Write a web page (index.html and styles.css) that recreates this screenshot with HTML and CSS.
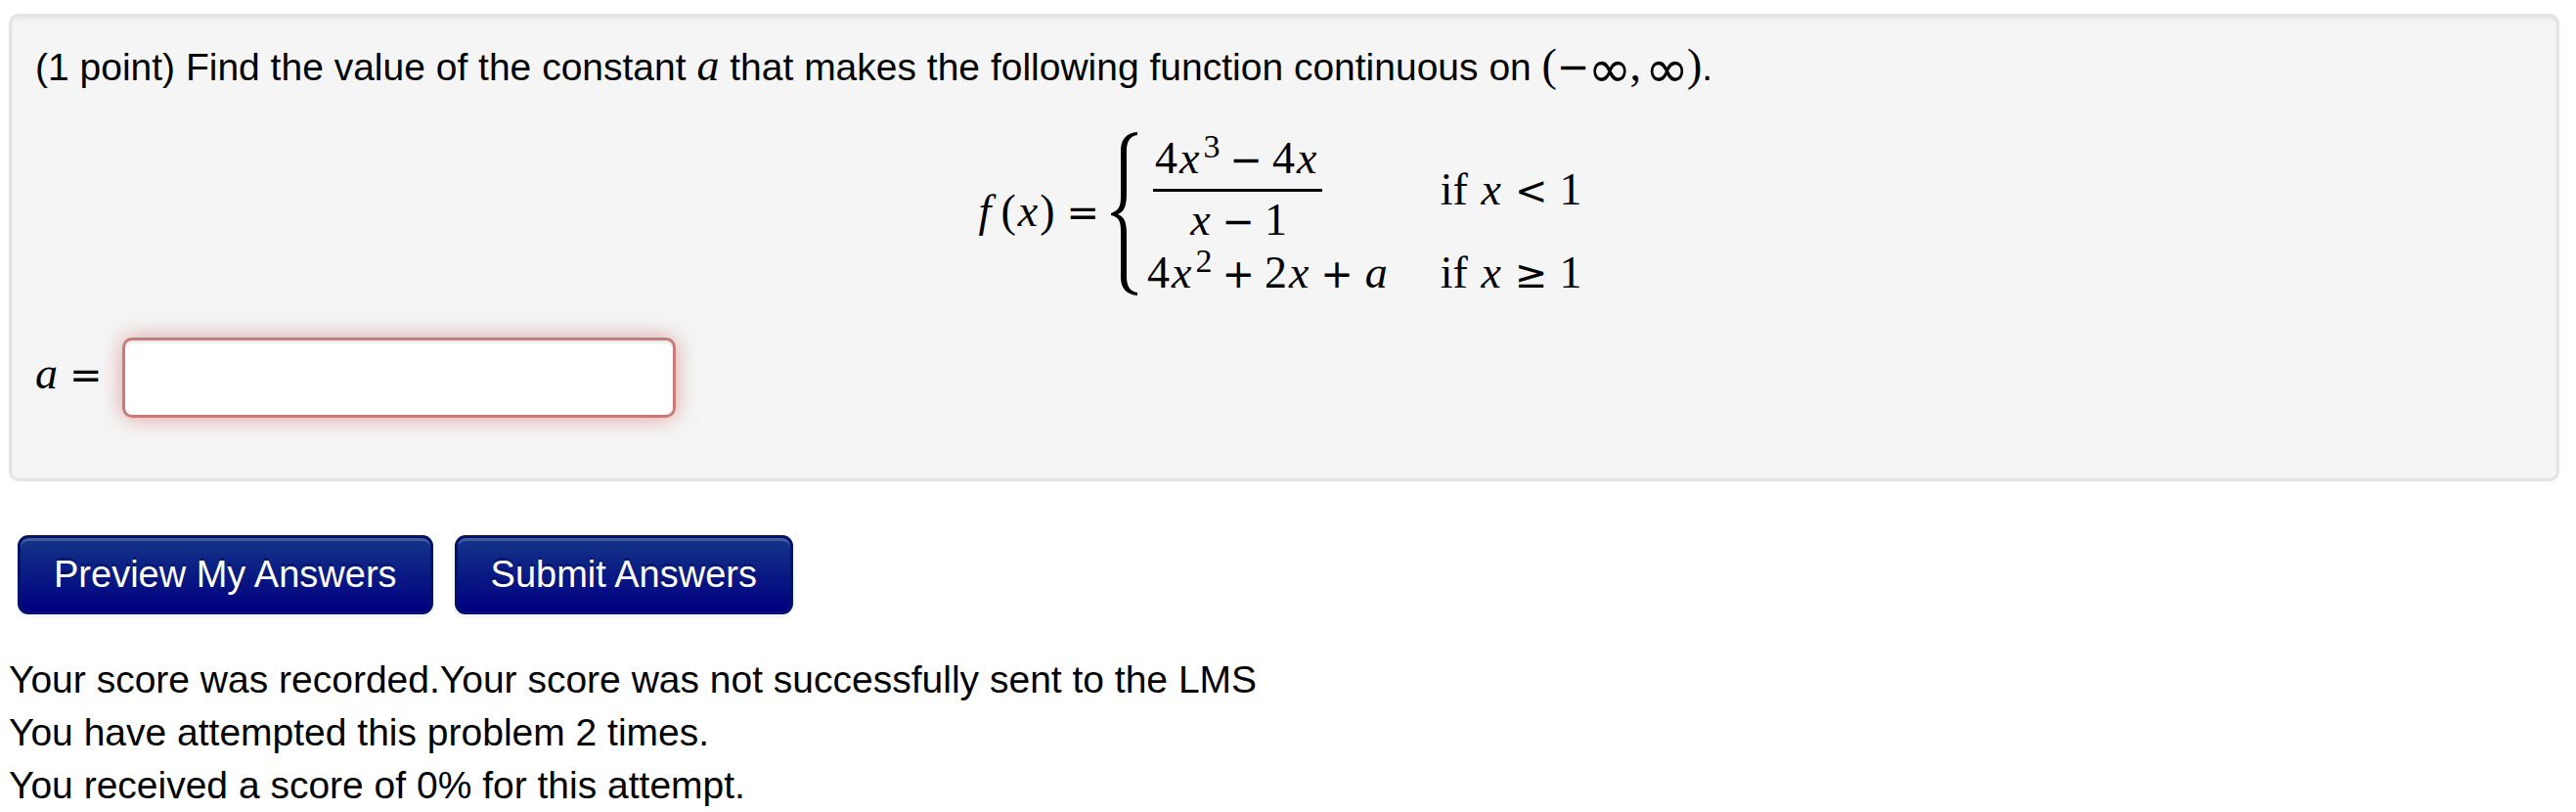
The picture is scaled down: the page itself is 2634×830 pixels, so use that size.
FILE: index.html
```
<!DOCTYPE html>
<html lang="en">
<head>
    <meta charset="utf-8">
    <title>Problem</title>
    <link rel="stylesheet" href="styles.css">
</head>
<body>
    <form class="problem-form">
        <div class="problem">
            <p>(1 point) Find the value of the constant <span class="math"><i>a</i></span> that makes the following function continuous on <span class="math">(<span class="sign">−</span><span class="inf">∞</span>,<span class="thin"></span><span class="inf">∞</span>)</span>.</p>

            <div class="math equation">
                <div class="lhs"><i class="func">f</i>(<i>x</i>)<span class="rel">=</span></div>
                <svg class="brace" viewBox="0 0 27 167" aria-hidden="true">
                    <path d="M27 0 C16 1 10 7 10 19 V66 C10 76 8 80 0 83 V85 C8 87 10 91 10 101 V148 C10 160 16 166 27 167 V164 C20 163 16 158 16 148 V105 C16 92 14 87 7 84 C14 81 16 75 16 62 V19 C16 9 20 4 27 3 Z"/>
                </svg>
                <div class="cases">
                    <div class="fraction">
                        <div class="numerator">4<i>x</i><sup>3</sup><span class="op">−</span>4<i>x</i></div>
                        <div class="denominator"><i>x</i><span class="op">−</span>1</div>
                    </div>
                    <div>if <i>x</i><span class="rel">&lt;</span>1</div>
                    <div>4<i>x</i><sup>2</sup><span class="op">+</span>2<i>x</i><span class="op">+</span><i>a</i></div>
                    <div>if <i>x</i><span class="rel">≥</span>1</div>
                </div>
            </div>

            <div class="answer">
                <label class="math" for="answer"><i>a</i><span class="rel">=</span></label>
                <input type="text" id="answer" autocomplete="off">
            </div>
        </div>

        <div class="buttons">
            <button type="button">Preview My Answers</button>
            <button type="button">Submit Answers</button>
        </div>
    </form>

    <div class="messages">
        <div>Your score was recorded.Your score was not successfully sent to the LMS</div>
        <div>You have attempted this problem 2 times.</div>
        <div>You received a score of 0% for this attempt.</div>
    </div>
</body>
</html>
```
FILE: styles.css
```
body {
    margin: 14px 17px 0 9px;
    font-family: "Liberation Sans", Arial, sans-serif;
    font-size: 39px;
    line-height: 54px;
    color: #000;
    background: #fff;
}

.problem {
    padding: 25px 24px 62px;
    border: 3px solid #e3e3e3;
    border-radius: 10px;
    background: #f5f5f5;
    box-shadow: inset 0 3px 3px rgba(0, 0, 0, 0.05);
}

.problem p {
    margin: 0;
}

/* math */
.math {
    font-family: "Liberation Serif", "Times New Roman", serif;
    font-size: 46px;
    line-height: 50px;
}

p .math {
    line-height: 0;
}

.thin {
    margin-left: 6px;
}

.op,
.rel,
.sign,
.inf {
    font-family: "DejaVu Sans", sans-serif;
    font-size: 40px;
    line-height: 0;
}

.op {
    margin: 0 10px;
}

.rel {
    margin: 0 12px;
}

.inf {
    margin: 0 -2px;
    font-size: 54px;
    vertical-align: -7px;
}

.math sup {
    margin-left: 2px;
    font-size: 34px;
    line-height: 0;
    vertical-align: 16px;
}

.equation {
    display: flex;
    justify-content: center;
    align-items: center;
    margin: 37px 10px 41px 0;
    white-space: nowrap;
}

.equation i {
    margin: 0 2px;
}

.lhs {
    margin-bottom: 6px;
}

.equation .func {
    margin-right: 10px;
}

.brace {
    width: 27px;
    height: 167px;
}

.cases {
    display: grid;
    grid-template-columns: auto auto;
    align-items: center;
    gap: 4px 52px;
    margin: 4px 0 0 10px;
}

.fraction {
    justify-self: start;
    margin-left: 6px;
    text-align: center;
}

.numerator {
    padding: 0 4px 6px 2px;
    border-bottom: 3px solid #000;
}

.denominator {
    padding-top: 4px;
}

/* answer */
.answer {
    display: flex;
    align-items: center;
}

.answer label {
    margin-bottom: 8px;
}

.answer input {
    box-sizing: border-box;
    width: 566px;
    height: 82px;
    padding: 10px 16px;
    border: 3px solid #c77c7a;
    border-radius: 10px;
    background: #fff;
    font: inherit;
    outline: none;
    box-shadow: inset 0 3px 3px rgba(0, 0, 0, 0.08), 0 0 22px rgba(200, 80, 75, 0.5);
}

.answer .rel {
    margin-right: 20px;
}

/* buttons */
.buttons {
    display: flex;
    gap: 22px;
    margin: 55px 9px 40px;
}

.buttons button {
    padding: 10px 34px 11px;
    border: 3px solid #00146c;
    border-radius: 11px;
    background: linear-gradient(#143488, #000080) padding-box, #00146c;
    color: #fff;
    font: inherit;
    font-size: 38px;
    text-shadow: 0 -3px 0 rgba(0, 0, 0, 0.25);
    box-shadow: inset 0 3px 0 rgba(255, 255, 255, 0.2), 0 3px 5px rgba(0, 0, 0, 0.05);
    cursor: pointer;
}
```
